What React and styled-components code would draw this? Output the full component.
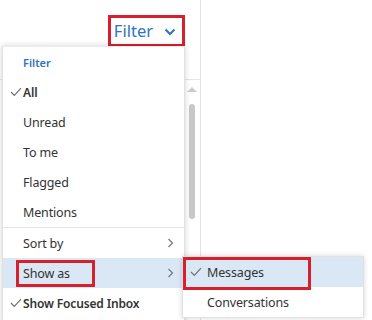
import styled, { createGlobalStyle } from 'styled-components';

const GlobalStyle = createGlobalStyle`
	html, body {
		margin: 0;
		padding: 0;
		background: #ffffff;
	}
	body {
		font-family: 'Noto Sans', 'Open Sans', sans-serif;
		color: #333333;
	}
`;

const Page = styled.div`
	position: relative;
	width: 372px;
	height: 320px;
	overflow: hidden;
	display: flex;
	background: #ffffff;
`;

const ListPane = styled.div`
	width: 200px;
	border-right: 1px solid #e3e3e3;
	display: flex;
	flex-direction: column;
`;

const Header = styled.div`
	height: 80px;
	display: flex;
	justify-content: flex-end;
	align-items: flex-start;
	padding-top: 15px;
	padding-right: 15px;
	box-sizing: border-box;
	border-bottom: 1px solid #e6e6e6;
`;

const FilterButton = styled.div`
	display: flex;
	align-items: center;
	gap: 11px;
	height: 32px;
	padding: 1px 6px 0 3px;
	border: 3px solid #d7202c;
	box-sizing: border-box;
	color: #2f73c3;
	font-size: 16.5px;
	line-height: 1;
`;

const ListBody = styled.div`
	flex: 1;
	display: flex;
	justify-content: flex-end;
`;

const ScrollTrack = styled.div`
	width: 16px;
	display: flex;
	flex-direction: column;
	align-items: center;
	padding-top: 7px;
	gap: 12px;
`;

const ArrowUp = styled.div`
	width: 0;
	height: 0;
	border-left: 5px solid transparent;
	border-right: 5px solid transparent;
	border-bottom: 5px solid #cccccc;
`;

const Thumb = styled.div`
	width: 6px;
	height: 115px;
	border-radius: 3px;
	background: #c8c8c8;
`;

const Menu = styled.div`
	position: absolute;
	left: 2px;
	top: 46px;
	width: 181px;
	background: #ffffff;
	border: 1px solid #e1e1e1;
	border-top-color: #ececec;
	box-shadow: 0 0 6px rgba(0, 0, 0, 0.18);
	display: flex;
	flex-direction: column;
	padding-bottom: 6px;
`;

const Item = styled.div`
	position: relative;
	height: 30px;
	display: flex;
	align-items: center;
	padding-left: 20px;
	padding-right: 12px;
	font-size: ${(p) => (p.$bold ? '12px' : '12.5px')};
	letter-spacing: -0.15px;
	font-weight: ${(p) => (p.$bold ? 600 : 400)};
	background: ${(p) => (p.$active ? '#dae8f6' : 'transparent')};
	color: #333333;
`;

const MenuTitle = styled(Item)`
	color: #2f73c3;
	font-size: 11px;
	font-weight: 600;
	letter-spacing: 0;
`;

const Check = styled.span`
	position: absolute;
	left: 7px;
	top: 50%;
	transform: translateY(-50%);
	display: flex;
	color: #6f6f6f;
`;

const Label = styled.span`
	flex: 1;
`;

const Marked = styled.span`
	margin-left: -7px;
	padding: 0 22px 0 4px;
	height: 27px;
	display: flex;
	align-items: center;
	border: 3px solid #d7202c;
	box-sizing: border-box;
	margin-right: auto;
`;

const Chevron = styled.span`
	display: flex;
	color: #777777;
	margin-right: -2px;
`;

const Divider = styled.div`
	height: 1px;
	background: #e6e6e6;
`;

const SubMenu = styled.div`
	position: absolute;
	left: 182px;
	top: 256px;
	width: 180px;
	background: #ffffff;
	border: 1px solid #e1e1e1;
	box-shadow: 0 0 5px rgba(0, 0, 0, 0.16);
	display: flex;
	flex-direction: column;
`;

const SubItem = styled(Item)`
	padding-left: 24px;
`;

const MarkBox = styled.div`
	position: absolute;
	left: 0;
	top: 0;
	width: 128px;
	height: 33px;
	border: 3px solid #d7202c;
	box-sizing: border-box;
	pointer-events: none;
`;

const CheckIcon = () => (
	<svg width="12" height="10" viewBox="0 0 12 10">
		<path d="M1 5 L4.3 8.3 L11 1.2" fill="none" stroke="currentColor" strokeWidth="1.2" />
	</svg>
);

const ChevronIcon = () => (
	<svg width="7" height="10" viewBox="0 0 7 10">
		<path d="M1.5 1 L5.5 5 L1.5 9" fill="none" stroke="currentColor" strokeWidth="1.2" />
	</svg>
);

const DownIcon = () => (
	<svg width="12" height="8" viewBox="0 0 12 8">
		<path d="M1.5 1.5 L6 6 L10.5 1.5" fill="none" stroke="currentColor" strokeWidth="2" />
	</svg>
);

const filters = [
	{ label: 'All', checked: true },
	{ label: 'Unread' },
	{ label: 'To me' },
	{ label: 'Flagged' },
	{ label: 'Mentions' },
];

const App = () => {
	return (
		<Page>
			<GlobalStyle />
			<ListPane>
				<Header>
					<FilterButton>
						Filter
						<DownIcon />
					</FilterButton>
				</Header>
				<ListBody>
					<ScrollTrack>
						<ArrowUp />
						<Thumb />
					</ScrollTrack>
				</ListBody>
			</ListPane>

			<Menu>
				<MenuTitle>Filter</MenuTitle>
				{filters.map((f) => (
					<Item key={f.label} $bold={f.checked}>
						{f.checked && (
							<Check>
								<CheckIcon />
							</Check>
						)}
						<Label>{f.label}</Label>
					</Item>
				))}
				<Divider />
				<Item>
					<Label>Sort by</Label>
					<Chevron>
						<ChevronIcon />
					</Chevron>
				</Item>
				<Item $active>
					<Marked>Show as</Marked>
					<Chevron>
						<ChevronIcon />
					</Chevron>
				</Item>
				<Item $bold>
					<Check>
						<CheckIcon />
					</Check>
					<Label>Show Focused Inbox</Label>
				</Item>
			</Menu>

			<SubMenu>
				<SubItem $active>
					<Check>
						<CheckIcon />
					</Check>
					<Label>Messages</Label>
					<MarkBox />
				</SubItem>
				<SubItem>
					<Label>Conversations</Label>
				</SubItem>
			</SubMenu>
		</Page>
	);
};

export default App;
